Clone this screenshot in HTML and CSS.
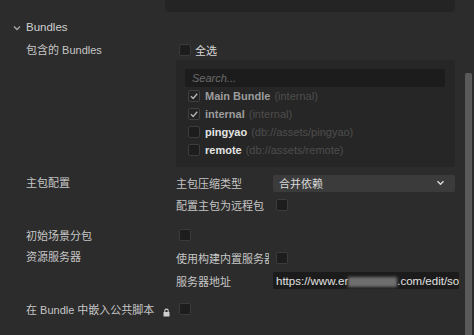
FILE: index.html
```html
<!DOCTYPE html>
<html>
<head>
<meta charset="utf-8">
<link rel="stylesheet" href="styles.css">
</head>
<body>
<div class="panel">
  <div class="top-box"></div>

  <div class="section-head">
    <svg class="chev" width="8" height="6" viewBox="0 0 8 6"><path d="M1 1.5 L4 4.5 L7 1.5" fill="none" stroke="#a8a8a8" stroke-width="1.3"/></svg>
    <span>Bundles</span>
  </div>

  <div class="prop prop-bundles">
    <div class="label top">包含的 Bundles</div>
    <div class="content col">
      <div class="check-line"><span class="cb"></span><span class="cb-text">全选</span></div>
      <div class="list">
        <div class="search">Search...</div>
        <div class="item">
          <span class="cb checked"><svg width="10" height="10" viewBox="0 0 10 10"><path d="M2 5.2 L4.2 7.4 L8.2 2.8" fill="none" stroke="#b5b5b5" stroke-width="1.4"/></svg></span>
          <span class="name dim">Main Bundle</span><span class="path">(internal)</span>
        </div>
        <div class="item">
          <span class="cb checked"><svg width="10" height="10" viewBox="0 0 10 10"><path d="M2 5.2 L4.2 7.4 L8.2 2.8" fill="none" stroke="#b5b5b5" stroke-width="1.4"/></svg></span>
          <span class="name dim">internal</span><span class="path">(internal)</span>
        </div>
        <div class="item">
          <span class="cb"></span>
          <span class="name">pingyao</span><span class="path">(db://assets/pingyao)</span>
        </div>
        <div class="item">
          <span class="cb"></span>
          <span class="name">remote</span><span class="path">(db://assets/remote)</span>
        </div>
      </div>
    </div>
  </div>

  <div class="prop group-main">
    <div class="label top">主包配置</div>
    <div class="content col">
      <div class="sub">
        <div class="sublabel">主包压缩类型</div>
        <div class="select"><span>合并依赖</span>
          <svg width="9" height="6" viewBox="0 0 9 6"><path d="M1.5 1.2 L4.5 4.2 L7.5 1.2" fill="none" stroke="#d8d8d8" stroke-width="1.5"/></svg>
        </div>
      </div>
      <div class="sub">
        <div class="sublabel">配置主包为远程包</div>
        <span class="cb sub-cb"></span>
      </div>
    </div>
  </div>

  <div class="prop group-init">
    <div class="label">初始场景分包</div>
    <div class="content"><span class="cb main-cb"></span></div>
  </div>

  <div class="prop group-server">
    <div class="label top">资源服务器</div>
    <div class="content col">
      <div class="sub tall">
        <div class="sublabel">使用构建内置服务器</div>
        <span class="cb sub-cb"></span>
      </div>
      <div class="sub tall">
        <div class="sublabel">服务器地址</div>
        <div class="input"><span>https://www.er</span><span class="blur"></span><span>.com/edit/so</span></div>
      </div>
    </div>
  </div>

  <div class="prop group-embed">
    <div class="label with-lock">
      <span>在 Bundle 中嵌入公共脚本</span>
      <svg class="lock" width="7" height="9" viewBox="0 0 7 9"><path d="M1.8 4 V2.8 A1.7 1.7 0 0 1 5.2 2.8 V4" fill="none" stroke="#d0d0d0" stroke-width="1.1"/><rect x="0.5" y="4" width="6" height="4.6" rx="0.6" fill="#d0d0d0"/></svg>
    </div>
    <div class="content"><span class="cb main-cb"></span></div>
  </div>

  <div class="scrollbar"></div>
</div>
</body>
</html>
```
FILE: styles.css
```css
* { box-sizing: border-box; }
html, body {
  margin: 0;
  padding: 0;
  background: #2c2c2c;
}
body {
  width: 474px;
  height: 335px;
  overflow: hidden;
  font-family: "Liberation Sans", "Noto Sans CJK SC", sans-serif;
  font-size: 11px;
  color: #c6c6c6;
}
.panel {
  position: relative;
  width: 474px;
  height: 335px;
  padding-right: 19px;
}
.top-box {
  margin-left: 165px;
  width: 290px;
  height: 12px;
  background: #242424;
  border-radius: 0 0 4px 4px;
}
.section-head {
  display: flex;
  align-items: center;
  height: 22px;
  margin-top: 4px;
  padding-left: 13px;
  color: #cfcfcf;
  font-size: 11.5px;
}
.chev { margin-right: 5px; margin-top: 1px; }

.prop {
  display: flex;
  align-items: center;
}
.label {
  width: 176px;
  flex: none;
  padding-left: 26px;
  white-space: nowrap;
}
.label.top { align-self: flex-start; }
.content { flex: 1; display: flex; align-items: center; }
.content.col { flex-direction: column; align-items: stretch; }

.prop-bundles { margin-top: 2px; }
.prop-bundles .label { line-height: 20px; }
.check-line {
  display: flex;
  align-items: center;
  height: 20px;
  padding-left: 3px;
}
.cb-text { margin-left: 4px; color: #d6d6d6; }

.cb {
  display: inline-flex;
  align-items: center;
  justify-content: center;
  flex: none;
  width: 12px;
  height: 12px;
  background: #1d1d1d;
  border: 1px solid #3b3b3b;
  border-radius: 2px;
}
.cb.checked { background: #232323; border-color: #404040; }

.list {
  background: #262626;
  border-radius: 3px;
  padding: 9px 10px 8px 9px;
  height: 107px;
}
.search {
  height: 18px;
  background: #1c1c1c;
  border-radius: 2px;
  padding-left: 7px;
  line-height: 18px;
  font-style: italic;
  color: #6a6a6a;
}
.item {
  display: flex;
  align-items: center;
  height: 18px;
  padding-left: 3px;
  white-space: nowrap;
}
.item .cb { margin-right: 5px; }
.name { font-weight: bold; color: #e4e4e4; }
.name.dim { color: #9c9c9c; }
.path { margin-left: 4px; color: #4d4d4d; }

.group-main { margin-top: 5px; }
.group-main .label { line-height: 22px; }
.sub {
  display: flex;
  align-items: center;
  height: 22px;
}
.sub.tall { height: 23px; }
.sublabel {
  width: 93px;
  margin-right: 4px;
  overflow: hidden;
  white-space: nowrap;
  flex: none;
}
.sub-cb { margin-left: 3px; }
.main-cb { margin-left: 3px; }

.select {
  flex: 1;
  height: 17px;
  background: #3b3b3b;
  border-radius: 2px;
  display: flex;
  align-items: center;
  justify-content: space-between;
  padding: 0 10px 0 6px;
  color: #dcdcdc;
}

.group-init { margin-top: 8px; height: 22px; }
.group-server .label { line-height: 23px; }
.input {
  flex: 1;
  height: 17px;
  background: #1b1b1b;
  border-radius: 2px;
  padding-left: 3px;
  display: flex;
  align-items: center;
  white-space: nowrap;
  overflow: hidden;
  color: #e2e2e2;
  font-size: 11.5px;
}
.blur {
  display: inline-block;
  flex: none;
  width: 49px;
  height: 10px;
  background: #6f6f6f;
  filter: blur(1.5px);
  margin-top: 2px;
}

.group-embed { margin-top: 6px; height: 22px; }
.with-lock {
  position: relative;
}
.lock {
  position: absolute;
  left: 163px;
  top: 7px;
}

.scrollbar {
  position: absolute;
  left: 465px;
  top: 73px;
  width: 7px;
  bottom: -10px;
  background: #5a5a5a;
  border-radius: 2px;
}
```
